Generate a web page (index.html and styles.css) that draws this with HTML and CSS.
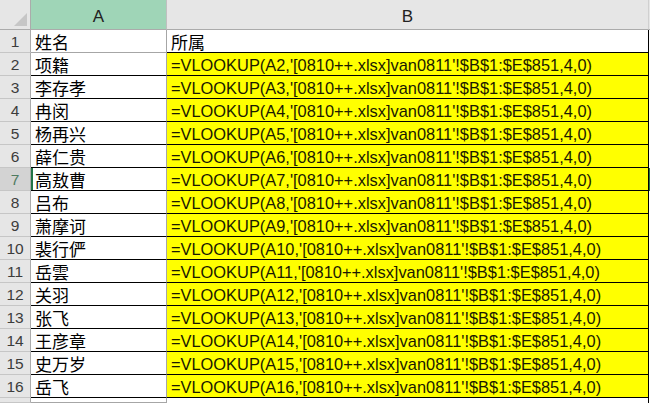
FILE: index.html
```html
<!DOCTYPE html>
<html lang="zh">
<head>
<meta charset="utf-8">
<title>Sheet</title>
<link rel="stylesheet" href="styles.css">
</head>
<body>
<div class="sheet">
  <div class="corner"><svg width="30" height="29" viewBox="0 0 30 29"><polygon points="27,13 27,26 14,26" fill="#c6c6c6"/></svg></div>
  <div class="colhead sel">A</div>
  <div class="colhead">B</div>
  <div class="colhead edge"></div>

  <div class="rh">1</div><div class="ca g">姓名</div><div class="cb w">所属</div><div class="cx"></div>
  <div class="rh">2</div><div class="ca">项籍</div><div class="cb">=VLOOKUP(A2,'[0810++.xlsx]van0811'!$B$1:$E$851,4,0)</div><div class="cx"></div>
  <div class="rh">3</div><div class="ca">李存孝</div><div class="cb">=VLOOKUP(A3,'[0810++.xlsx]van0811'!$B$1:$E$851,4,0)</div><div class="cx"></div>
  <div class="rh">4</div><div class="ca">冉闵</div><div class="cb">=VLOOKUP(A4,'[0810++.xlsx]van0811'!$B$1:$E$851,4,0)</div><div class="cx"></div>
  <div class="rh">5</div><div class="ca">杨再兴</div><div class="cb">=VLOOKUP(A5,'[0810++.xlsx]van0811'!$B$1:$E$851,4,0)</div><div class="cx"></div>
  <div class="rh">6</div><div class="ca">薛仁贵</div><div class="cb">=VLOOKUP(A6,'[0810++.xlsx]van0811'!$B$1:$E$851,4,0)</div><div class="cx"></div>
  <div class="rh act">7</div><div class="ca act">高敖曹</div><div class="cb">=VLOOKUP(A7,'[0810++.xlsx]van0811'!$B$1:$E$851,4,0)</div><div class="cx act"></div>
  <div class="rh">8</div><div class="ca">吕布</div><div class="cb">=VLOOKUP(A8,'[0810++.xlsx]van0811'!$B$1:$E$851,4,0)</div><div class="cx"></div>
  <div class="rh">9</div><div class="ca">萧摩诃</div><div class="cb">=VLOOKUP(A9,'[0810++.xlsx]van0811'!$B$1:$E$851,4,0)</div><div class="cx"></div>
  <div class="rh">10</div><div class="ca">裴行俨</div><div class="cb">=VLOOKUP(A10,'[0810++.xlsx]van0811'!$B$1:$E$851,4,0)</div><div class="cx"></div>
  <div class="rh">11</div><div class="ca">岳雲</div><div class="cb">=VLOOKUP(A11,'[0810++.xlsx]van0811'!$B$1:$E$851,4,0)</div><div class="cx"></div>
  <div class="rh">12</div><div class="ca">关羽</div><div class="cb">=VLOOKUP(A12,'[0810++.xlsx]van0811'!$B$1:$E$851,4,0)</div><div class="cx"></div>
  <div class="rh">13</div><div class="ca">张飞</div><div class="cb">=VLOOKUP(A13,'[0810++.xlsx]van0811'!$B$1:$E$851,4,0)</div><div class="cx"></div>
  <div class="rh">14</div><div class="ca">王彦章</div><div class="cb">=VLOOKUP(A14,'[0810++.xlsx]van0811'!$B$1:$E$851,4,0)</div><div class="cx"></div>
  <div class="rh">15</div><div class="ca">史万岁</div><div class="cb">=VLOOKUP(A15,'[0810++.xlsx]van0811'!$B$1:$E$851,4,0)</div><div class="cx"></div>
  <div class="rh">16</div><div class="ca">岳飞</div><div class="cb">=VLOOKUP(A16,'[0810++.xlsx]van0811'!$B$1:$E$851,4,0)</div><div class="cx"></div>
  <div class="rh"></div><div class="ca g"></div><div class="cb w g"></div><div class="cx w"></div>
</div>
</body>
</html>
```
FILE: styles.css
```css
* { box-sizing: border-box; }
html, body { margin: 0; padding: 0; background: #fff; overflow: hidden; }
.sheet {
  width: 650px;
  height: 403px;
  display: grid;
  grid-template-columns: 31px 136px 482px 1fr;
  grid-template-rows: 30px repeat(16, 23px) 1fr;
  font-family: "Liberation Sans", "Noto Sans CJK SC", sans-serif;
  overflow: hidden;
}
.corner {
  background: #e6e6e6;
  border-right: 1px solid #ababab;
  border-bottom: 1px solid #ababab;
}
.corner svg { display: block; }
.colhead {
  background: #e6e6e6;
  border-right: 1px solid #d0d0d0;
  border-bottom: 1px solid #ababab;
  font-size: 17px;
  color: #222;
  text-align: center;
  line-height: 34px;
}
.colhead.sel { background: #9fd5b7; border-right-color: #c0c0c0; }
.colhead.edge { border-right: none; }
.rh {
  background: #e6e6e6;
  border-right: 1px solid #ababab;
  border-bottom: 1px solid #c6c6c6;
  font-size: 15.5px;
  color: #3c3c3c;
  text-align: center;
  line-height: 24px;
}
.rh.act { background: #d3d3d3; color: #4f7b60; }
.ca, .cb {
  border-bottom: 1px solid #000;
  white-space: nowrap;
  overflow: hidden;
  padding-left: 4px;
  color: #000;
}
.ca {
  background: #fff;
  border-right: 1px solid #a6a6a6;
  font-family: "Noto Sans CJK SC", sans-serif;
  font-size: 17px;
  line-height: 22px;
  padding-top: 1px;
}
.ca.act { box-shadow: inset 2px 0 0 #217346; }
.cb {
  background: #ffff00;
  border-right: 1px solid #000;
  font-size: 16.4px;
  line-height: 24px;
  color: #1a1a00;
}
.cb.w {
  background: #fff;
  font-family: "Noto Sans CJK SC", sans-serif;
  font-size: 17px;
  line-height: 22px;
  padding-top: 1px;
  color: #000;
}
.g { border-bottom-color: #a6a6a6; }
.cb.w.g { border-bottom: none; }
.ca.g + .cb.w.g { border-bottom: none; }
.cx { background: #fff; }
.cx.act { background: #217346; width: 2px; }
.cx.w { background: #fff; }
```
